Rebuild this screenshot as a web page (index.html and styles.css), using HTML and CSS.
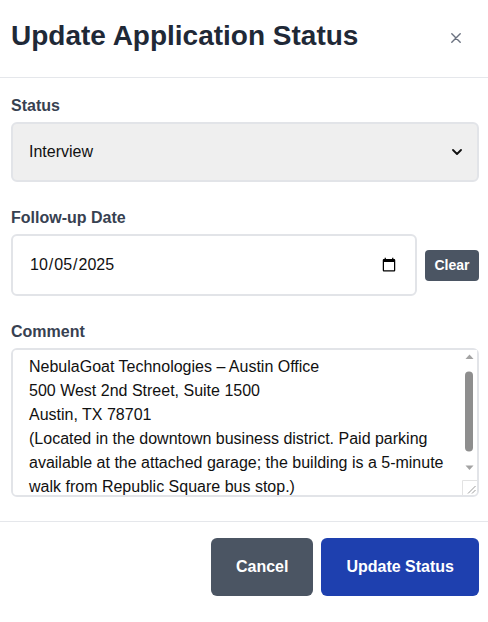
FILE: index.html
```html
<!DOCTYPE html>
<html lang="en">
<head>
<meta charset="utf-8">
<title>Update Application Status</title>
<link rel="stylesheet" href="styles.css">
</head>
<body>
<div class="modal">
  <div class="modal-header">
    <h2 class="modal-title">Update Application Status</h2>
    <button class="close-btn" type="button" aria-label="Close">
      <svg width="10" height="10" viewBox="0 0 10 10"><path d="M0.8 0.8 L9.2 9.2 M9.2 0.8 L0.8 9.2" stroke="#6b7280" stroke-width="1.4" fill="none" stroke-linecap="round"/></svg>
    </button>
  </div>
  <div class="modal-body">
    <div class="field">
      <label class="field-label" for="status">Status</label>
      <div class="select-wrap">
        <select id="status" class="select">
          <option>Applied</option>
          <option selected>Interview</option>
          <option>Offer</option>
          <option>Rejected</option>
        </select>
        <svg class="select-chevron" width="10" height="6" viewBox="0 0 10 6"><path d="M1 1 L5 5 L9 1" stroke="#111111" stroke-width="1.8" fill="none" stroke-linecap="round" stroke-linejoin="round"/></svg>
      </div>
    </div>
    <div class="field">
      <label class="field-label" for="date">Follow-up Date</label>
      <div class="date-row">
        <input id="date" class="date-input" type="date" value="2025-10-05">
        <button class="clear-btn" type="button">Clear</button>
      </div>
    </div>
    <div class="field">
      <label class="field-label" for="comment">Comment</label>
      <div class="textarea-wrap">
        <textarea id="comment" class="textarea">NebulaGoat Technologies – Austin Office
500 West 2nd Street, Suite 1500
Austin, TX 78701
(Located in the downtown business district. Paid parking available at the attached garage; the building is a 5-minute walk from Republic Square bus stop.)</textarea>
        <svg class="scrollbar" width="15" height="145" viewBox="0 0 15 145" aria-hidden="true">
          <rect x="0" y="0" width="15" height="130" fill="#ffffff"/>
          <path d="M3.5 9 L11.5 9 L7.5 4.5 Z" fill="#a3a3a3"/>
          <rect x="3" y="21.5" width="8" height="80" rx="4" fill="#8e8e8e"/>
          <path d="M3.5 115.5 L11.5 115.5 L7.5 120 Z" fill="#a3a3a3"/>
          <path d="M0.5 145 L0.5 130.5 L15 130.5" stroke="#e3e3e3" stroke-width="1" fill="none"/>
          <path d="M6 143.5 L13.5 136 M10 143.5 L13.5 140" stroke="#9a9a9a" stroke-width="1" fill="none"/>
        </svg>
      </div>
    </div>
  </div>
  <div class="modal-footer">
    <button class="btn btn-cancel" type="button">Cancel</button>
    <button class="btn btn-primary" type="button">Update Status</button>
  </div>
</div>
<script src="script.js"></script>
</body>
</html>
```
FILE: styles.css
```css
body {
  margin: 0;
  background: #ffffff;
  font-family: "Liberation Sans", Arial, sans-serif;
}

.modal {
  background: #ffffff;
}

.modal-header {
  display: flex;
  justify-content: space-between;
  align-items: center;
  padding: 20px 19px 25px 11px;
  border-bottom: 1px solid #e5e7eb;
}

.modal-title {
  margin: 0;
  font-size: 28px;
  line-height: 32px;
  font-weight: 700;
  color: #1f2937;
}

.close-btn {
  display: flex;
  padding: 8px;
  margin-top: 4px;
  border: none;
  background: transparent;
  cursor: pointer;
}

.modal-body {
  padding: 16px 9px 24px 11px;
}

.field {
  margin-bottom: 24px;
}

.field:last-child {
  margin-bottom: 0;
}

.field-label {
  display: block;
  margin-bottom: 4px;
  font-size: 16px;
  line-height: 24px;
  font-weight: 700;
  color: #374151;
}

.select-wrap {
  position: relative;
}

.select {
  display: block;
  width: 100%;
  height: 60px;
  box-sizing: border-box;
  padding: 16px;
  -webkit-appearance: none;
  appearance: none;
  font-family: "Liberation Sans", Arial, sans-serif;
  font-size: 16px;
  line-height: 24px;
  color: #111111;
  background-color: #efefef;
  border: 2px solid #e2e4e8;
  border-radius: 6px;
}

.select-chevron {
  position: absolute;
  right: 17px;
  top: 27px;
  pointer-events: none;
}

.date-row {
  display: flex;
  align-items: center;
  gap: 8px;
}

.date-input {
  flex: 1;
  height: 62px;
  box-sizing: border-box;
  padding: 16px;
  font-family: "Liberation Sans", Arial, sans-serif;
  font-size: 16px;
  line-height: 24px;
  color: #111111;
  background: #ffffff;
  border: 2px solid #e2e4e8;
  border-radius: 6px;
}

.clear-btn {
  width: 54px;
  height: 31px;
  padding: 0;
  border: none;
  border-radius: 4px;
  background: #4b5563;
  color: #ffffff;
  font-family: "Liberation Sans", Arial, sans-serif;
  font-size: 14px;
  font-weight: 700;
  cursor: pointer;
}

.textarea-wrap {
  position: relative;
}

.textarea {
  display: block;
  width: 100%;
  height: 149px;
  box-sizing: border-box;
  margin: 0;
  padding: 16px 31px 16px 16px;
  resize: none;
  font-family: "Liberation Sans", Arial, sans-serif;
  font-size: 16px;
  line-height: 24px;
  color: #111111;
  background: #ffffff;
  border: 2px solid #e2e4e8;
  border-radius: 6px;
}

.scrollbar {
  position: absolute;
  top: 2px;
  right: 2px;
  pointer-events: none;
}

.modal-footer {
  display: flex;
  justify-content: flex-end;
  gap: 8px;
  padding: 16px 9px 26px 11px;
  border-top: 1px solid #e5e7eb;
}

.btn {
  padding: 16px 24px;
  border: 1px solid transparent;
  border-radius: 6px;
  font-family: "Liberation Sans", Arial, sans-serif;
  font-size: 16px;
  line-height: 24px;
  font-weight: 700;
  color: #ffffff;
  cursor: pointer;
}

.btn-cancel {
  background: #4b5563;
}

.btn-primary {
  background: #1e40af;
}
```
FILE: script.js
```js
document.getElementById('comment').scrollTop = 11;
```
